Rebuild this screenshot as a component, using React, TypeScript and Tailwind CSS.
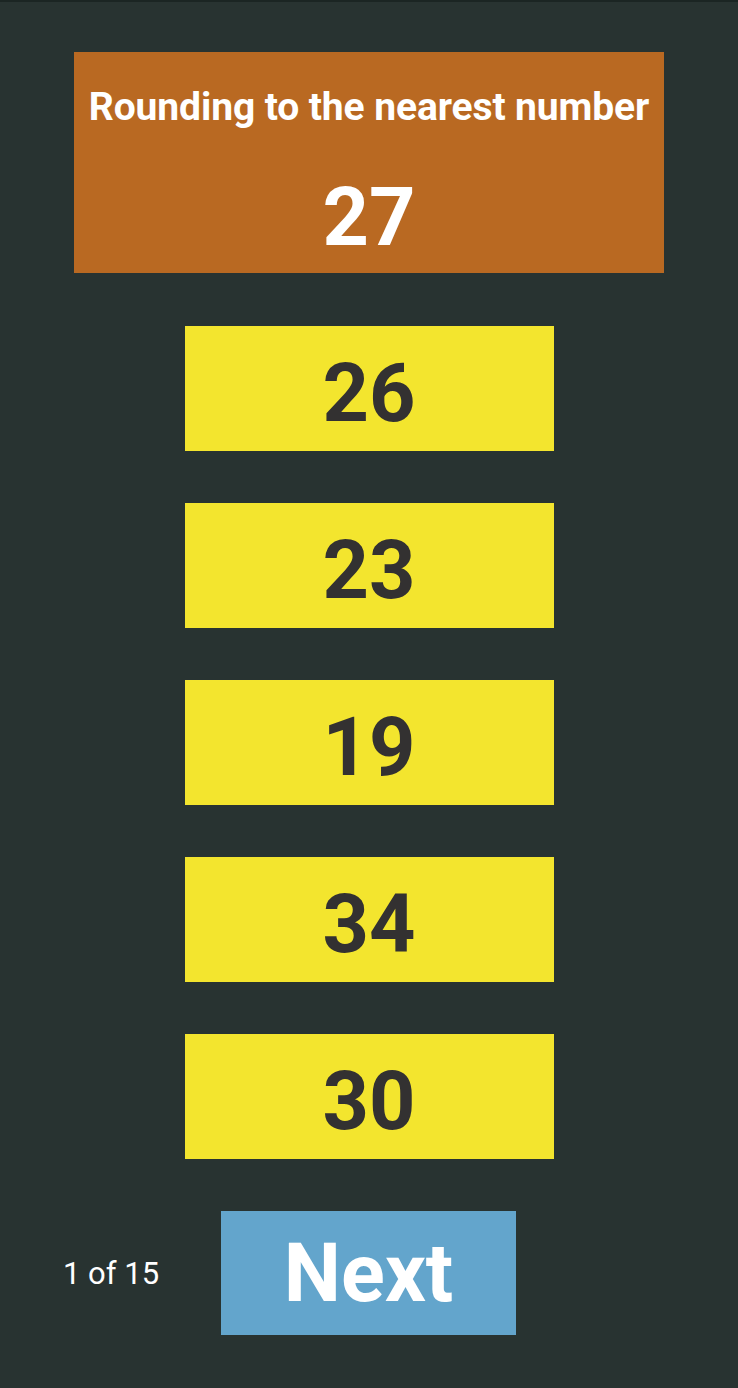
const choices = [26, 23, 19, 34, 30]

export default function App() {
  return (
    <div
      className="w-[738px] h-[1388px] bg-[#283331] border-t-2 border-[#1b2523] flex flex-col items-center"
      style={{ fontFamily: 'Roboto, "Liberation Sans", sans-serif' }}
    >
      {/* Question card */}
      <div className="mt-[50px] w-[590px] h-[221px] bg-[#b96922] flex flex-col items-center pt-[26px]">
        <div className="text-white text-[39px] font-bold leading-normal tracking-[-0.1px] whitespace-nowrap">
          Rounding to the nearest number
        </div>
        <div className="mt-[40px] text-white text-[81px] font-bold leading-none">27</div>
      </div>

      {/* Answer options */}
      <div className="mt-[53px] flex flex-col gap-[52px]">
        {choices.map((n) => (
          <button
            key={n}
            className="w-[369px] h-[125px] bg-[#f3e52e] flex items-center justify-center pt-[9px] text-[#333131] text-[81px] font-bold leading-none"
          >
            {n}
          </button>
        ))}
      </div>

      {/* Footer */}
      <div className="mt-[52px] w-full flex items-center pl-[63px]">
        <div className="w-[158px] text-white text-[31px] leading-none">1 of 15</div>
        <button className="w-[295px] h-[124px] bg-[#63a5cc] flex items-center justify-center text-white text-[81px] font-bold leading-none">
          Next
        </button>
      </div>
    </div>
  )
}
